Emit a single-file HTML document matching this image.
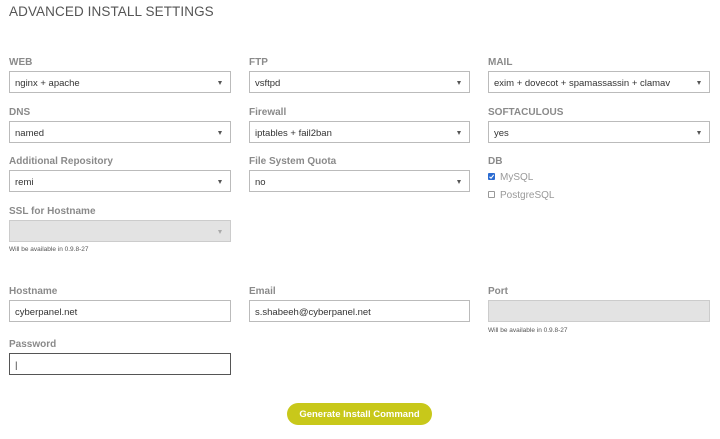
<!DOCTYPE html>
<html><head><style>
*{box-sizing:border-box;margin:0;padding:0}
body{width:720px;height:439px;background:#fff;font-family:"Liberation Sans",Arial,sans-serif;position:relative;overflow:hidden}
.a{position:absolute}
h1{position:absolute;left:9px;top:4px;font-size:13.5px;font-weight:normal;color:#555;letter-spacing:0.1px}
.l{position:absolute;font-size:10px;font-weight:bold;color:#8a8a8a;}
.s{position:absolute;height:22px;border:1px solid #bbb;background:#fff;font-size:9.5px;color:#333;padding:6px 0 0 5px}
.s.sel:after{content:"";position:absolute;right:8px;top:9px;border-left:2.5px solid transparent;border-right:2.5px solid transparent;border-top:4px solid #555}
.s.dis{background:#e3e3e3;border-color:#ccc}
.s.dis:after{border-top-color:#aaa}
.n{position:absolute;font-size:6.5px;color:#555}
.c1{left:9px;width:222px}.c2{left:249px;width:221px}.c3{left:488px;width:222px}
.cb{position:absolute;font-size:10px;color:#999}
</style></head><body>
<h1>ADVANCED INSTALL SETTINGS</h1>
<div class="l c1" style="top:57px">WEB</div><div class="s sel c1" style="top:71px">nginx + apache</div>
<div class="l c2" style="top:57px">FTP</div><div class="s sel c2" style="top:71px">vsftpd</div>
<div class="l c3" style="top:57px">MAIL</div><div class="s sel c3" style="top:71px">exim + dovecot + spamassassin + clamav</div>
<div class="l c1" style="top:107px">DNS</div><div class="s sel c1" style="top:121px">named</div>
<div class="l c2" style="top:107px">Firewall</div><div class="s sel c2" style="top:121px">iptables + fail2ban</div>
<div class="l c3" style="top:107px">SOFTACULOUS</div><div class="s sel c3" style="top:121px">yes</div>
<div class="l c1" style="top:156px">Additional Repository</div><div class="s sel c1" style="top:170px">remi</div>
<div class="l c2" style="top:156px">File System Quota</div><div class="s sel c2" style="top:170px">no</div>
<div class="l c3" style="top:156px">DB</div>
<div class="cb" style="left:488px;top:172px"><svg width="7" height="7" style="vertical-align:0;margin-right:5px"><rect width="7" height="7" rx="1" fill="#2a6bd1"/><path d="M1.5 3.8L3 5.2L5.7 1.8" stroke="#fff" stroke-width="1.1" fill="none"/></svg>MySQL</div>
<div class="cb" style="left:488px;top:190px"><span style="display:inline-block;width:7px;height:7px;border:1px solid #999;border-radius:1px;vertical-align:0;margin-right:5px"></span>PostgreSQL</div>
<div class="l c1" style="top:206px">SSL for Hostname</div><div class="s sel dis c1" style="top:220px"></div>
<div class="n c1" style="top:246px">Will be available in 0.9.8-27</div>
<div class="l c1" style="top:286px">Hostname</div><div class="s c1" style="top:300px">cyberpanel.net</div>
<div class="l c2" style="top:286px">Email</div><div class="s c2" style="top:300px">s.shabeeh@cyberpanel.net</div>
<div class="l c3" style="top:286px">Port</div><div class="s dis c3" style="top:300px"></div>
<div class="n c3" style="top:327px">Will be available in 0.9.8-27</div>
<div class="l c1" style="top:339px">Password</div><div class="s c1" style="top:353px;border-color:#555">|</div>
<div class="a" style="left:287px;top:403px;width:145px;height:22px;border-radius:11px;background:#c8c81a;color:#fff;font-size:9.5px;font-weight:bold;text-align:center;line-height:23px">Generate Install Command</div>
</body></html>
